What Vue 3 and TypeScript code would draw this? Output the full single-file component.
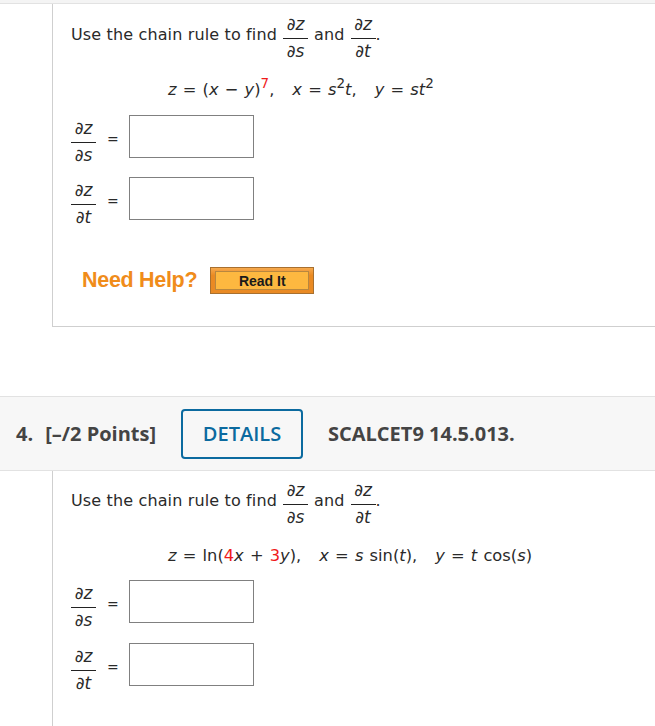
<script setup lang="ts">
interface Part { text: string; red?: boolean; italic?: boolean; sup?: boolean }
const eq1: Part[][] = [
  [{ text: 'z', italic: true }, { text: ' = (' }, { text: 'x', italic: true }, { text: ' − ' }, { text: 'y', italic: true }, { text: ')' }, { text: '7', red: true, sup: true }, { text: ',' }],
  [{ text: 'x', italic: true }, { text: ' = ' }, { text: 's', italic: true }, { text: '2', sup: true }, { text: 't', italic: true }, { text: ',' }],
  [{ text: 'y', italic: true }, { text: ' = ' }, { text: 'st', italic: true }, { text: '2', sup: true }],
]
const eq2: Part[][] = [
  [{ text: 'z', italic: true }, { text: ' = ln(' }, { text: '4', red: true }, { text: 'x', italic: true }, { text: ' + ' }, { text: '3', red: true }, { text: 'y', italic: true }, { text: '),' }],
  [{ text: 'x', italic: true }, { text: ' = ' }, { text: 's', italic: true }, { text: ' sin(' }, { text: 't', italic: true }, { text: '),' }],
  [{ text: 'y', italic: true }, { text: ' = ' }, { text: 't', italic: true }, { text: ' cos(' }, { text: 's', italic: true }, { text: ')' }],
]
const problems = [
  { eq: eq1, help: true },
  { eq: eq2, help: false },
]
function cls(p: Part): Record<string, boolean> {
  return { red: !!p.red, it: !!p.italic, sup: !!p.sup }
}
</script>

<template>
  <div class="page">
    <template v-for="(prob, i) in problems" :key="i">
      <header v-if="i === 1" class="head">
        <span class="pts"><span class="num">4.</span>[–/2 Points]</span>
        <button class="details">DETAILS</button>
        <span class="code">SCALCET9 14.5.013.</span>
      </header>
      <div class="top" v-else></div>
      <section class="body" :class="{ first: i === 0, second: i === 1 }">
        <div class="intro">
          <span class="txt">Use the chain rule to find</span>
          <span class="frac"><span class="n">∂z</span><span class="d">∂s</span></span>
          <span class="txt">and</span>
          <span class="frac"><span class="n">∂z</span><span class="d">∂t</span></span><span class="txt dot">.</span>
        </div>
        <div class="eq">
          <span v-for="(g, gi) in prob.eq" :key="gi" class="group"><span v-for="(p, pi) in g" :key="pi" :class="cls(p)">{{ p.text }}</span></span>
        </div>
        <div class="ans">
          <span class="frac"><span class="n">∂z</span><span class="d">∂s</span></span>
          <span class="eqs">=</span>
          <span class="box"></span>
        </div>
        <div class="ans">
          <span class="frac"><span class="n">∂z</span><span class="d">∂t</span></span>
          <span class="eqs">=</span>
          <span class="box"></span>
        </div>
        <div v-if="prob.help" class="help">
          <span class="need">Need Help?</span>
          <span class="read"><span class="inner">Read It</span></span>
        </div>
      </section>
    </template>
  </div>
</template>

<style>
html, body { margin: 0; background: #fff; }
</style>

<style scoped>
.page {
  width: 655px;
  height: 726px;
  overflow: hidden;
  font-family: "DejaVu Sans", sans-serif;
  font-size: 16px;
  color: #2a2a2a;
}
.top {
  height: 3px;
  background: #f4f4f4;
  border-bottom: 1px solid #e2e2e2;
}
.body {
  margin-left: 52px;
  border-left: 1px solid #cfcfcf;
  padding-left: 18px;
  box-sizing: border-box;
}
.first {
  height: 323px;
  border-bottom: 1px solid #cfcfcf;
  margin-bottom: 69px;
  padding-top: 10px;
}
.second {
  padding-top: 9px;
  height: 255px;
}
.intro {
  display: flex;
  align-items: center;
  gap: 6px;
  height: 46px;
  font-size: 16px;
  letter-spacing: 0.14px;
}
.txt { margin-bottom: 6px; }
.frac {
  display: inline-flex;
  flex-direction: column;
  align-items: center;
  font-style: italic;
  font-size: 17px;
  letter-spacing: 0;
  width: 25px;
  line-height: 20px;
}
.frac .n { border-bottom: 1px solid #222; width: 100%; text-align: center; padding-bottom: 4px; }
.frac .d { padding-top: 2px; }
.dot { margin-left: -6px; }
.eq {
  margin-left: 97px;
  margin-top: 18px;
  height: 24px;
  line-height: 24px;
  display: flex;
  gap: 18px;
  white-space: pre;
  font-size: 16.3px;
  word-spacing: 1px;
}
.it { font-style: italic; }
.red { color: #f01a1a; }
.sup { font-size: 13.5px; vertical-align: 7.5px; line-height: 0; }
.ans {
  display: flex;
  align-items: center;
  height: 43px;
  margin-top: 19px;
}
.eq + .ans { margin-top: 13px; }
.second .eq + .ans { margin-top: 12px; }
.second .ans + .ans { margin-top: 20px; }
.ans .frac { margin-top: 9px; }
.eqs { margin-left: 11px; margin-right: 10px; font-size: 14px; margin-top: 5px; }
.box {
  width: 123px;
  height: 41px;
  border: 1px solid #808080;
  background: #fff;
  box-sizing: content-box;
}
.help {
  display: flex;
  align-items: center;
  margin-top: 46px;
  margin-left: 11px;
  height: 28px;
}
.need {
  font-family: "Liberation Sans", sans-serif;
  font-weight: 700;
  font-size: 21.5px;
  color: #f08c1a;
  letter-spacing: -0.3px;
  margin-top: 1px;
  margin-right: 13px;
}
.read {
  box-sizing: border-box;
  width: 104px;
  height: 27px;
  margin-top: 1px;
  background: linear-gradient(#f6a94e, #ea8a22 30%, #e98a24);
  border: 1px solid #a8702f;
  padding: 3px 4px;
  display: flex;
}
.inner {
  flex: 1;
  background: #fdb840;
  border: 1px solid #b8873f;
  text-align: center;
  font-family: "Liberation Sans", sans-serif;
  font-weight: 700;
  font-size: 14px;
  line-height: 18px;
  color: #1a1a1a;
}
.head {
  height: 73px;
  background: #f7f7f7;
  border-top: 1px solid #e2e2e2;
  border-bottom: 1px solid #e2e2e2;
  display: flex;
  align-items: center;
  font-family: "Open Sans", sans-serif;
  font-weight: 700;
  font-size: 20px;
  color: #444;
  padding-left: 16px;
}
.num { margin-right: 12px; }
.pts { width: 165px; white-space: nowrap; }
.details {
  width: 122px;
  height: 50px;
  box-sizing: border-box;
  background: #fff0;
  border: 2px solid #0b6a9f;
  border-radius: 4px;
  color: #0b6a9f;
  font: 600 20px "Open Sans", sans-serif;
  padding: 0;
}
.code { margin-left: 25px; }
</style>
